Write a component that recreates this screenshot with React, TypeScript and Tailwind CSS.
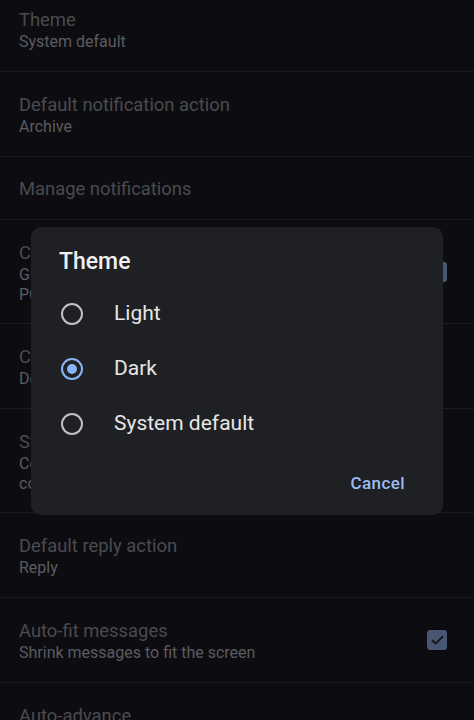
import { Check } from 'lucide-react'

type Row = {
  title: string
  lines?: string[]
  checked?: boolean
}

const rows: Row[] = [
  { title: 'Theme', lines: ['System default'] },
  { title: 'Default notification action', lines: ['Archive'] },
  { title: 'Manage notifications' },
  {
    title: 'Conversation view',
    lines: ['Group emails with the same topic together for IMAP,', 'POP3 and Exchange accounts'],
    checked: true,
  },
  { title: 'Conversation list density', lines: ['Default'] },
  {
    title: 'Swipe actions',
    lines: ['Configure swipe actions to quickly act on emails in the', 'conversation list'],
  },
  { title: 'Default reply action', lines: ['Reply'] },
  { title: 'Auto-fit messages', lines: ['Shrink messages to fit the screen'], checked: true },
  { title: 'Auto-advance', lines: ['Show conversation list after you archive or delete'] },
]

const options = ['Light', 'Dark', 'System default']

const rowPadding = (lines?: string[]) => {
  if (!lines) return 'pt-[20px] pb-[18px]'
  if (lines.length > 1) return 'pt-[21px] pb-[18px]'
  return 'pt-[21px] pb-[19px]'
}

const SettingRow = ({ title, lines, checked }: Row) => (
  <div className="flex items-center justify-between border-b border-[#1b1c20] pl-[19px] pr-[27px]">
    <div className={`flex flex-col ${rowPadding(lines)}`}>
      <p className="text-[18.4px] leading-[24px] text-[#4a4b4f] whitespace-nowrap">{title}</p>
      {lines?.map((l) => (
        <p key={l} className="text-[16px] leading-[20px] text-[#5b5c60] whitespace-nowrap">
          {l}
        </p>
      ))}
    </div>
    {checked && (
      <div className="flex h-[20px] w-[20px] shrink-0 items-center justify-center rounded-[3px] bg-[#475672]">
        <Check size={15} strokeWidth={3} className="text-[#14161c]" />
      </div>
    )}
  </div>
)

const Radio = ({ on }: { on: boolean }) => (
  <div
    className={`flex h-[22px] w-[22px] items-center justify-center rounded-full border-2 ${
      on ? 'border-[#8ab4f8]' : 'border-[#c2c2c2]'
    }`}
  >
    {on && <div className="h-[10px] w-[10px] rounded-full bg-[#8ab4f8]" />}
  </div>
)

export default function App() {
  return (
    <div
      className="relative h-[720px] w-[474px] overflow-hidden bg-[#0d0d11]"
      style={{ fontFamily: 'Roboto, "Noto Sans", sans-serif' }}
    >
      <div className="-mt-[13px] flex flex-col">
        {rows.map((r) => (
          <SettingRow key={r.title} {...r} />
        ))}
      </div>

      {/* theme picker dialog */}
      <div className="absolute left-[31px] top-[227px] flex h-[288px] w-[412px] flex-col rounded-[10px] bg-[#1f2023] pt-[21px] pb-[12px]">
        <h2 className="pl-[28px] text-[23px] font-medium leading-[28px] text-[#f0f0f0]">Theme</h2>
        <div className="mt-[10px] flex flex-col">
          {options.map((o) => (
            <div key={o} className="flex h-[55px] items-center pl-[30px]">
              <Radio on={o === 'Dark'} />
              <span className="ml-[31px] text-[21px] text-[#e6e6e6]">{o}</span>
            </div>
          ))}
        </div>
        <div className="mt-[13px] flex justify-end pr-[38px]">
          <button className="h-[40px] text-[17px] font-medium tracking-[0.4px] text-[#9dbcf0]">Cancel</button>
        </div>
      </div>
    </div>
  )
}
